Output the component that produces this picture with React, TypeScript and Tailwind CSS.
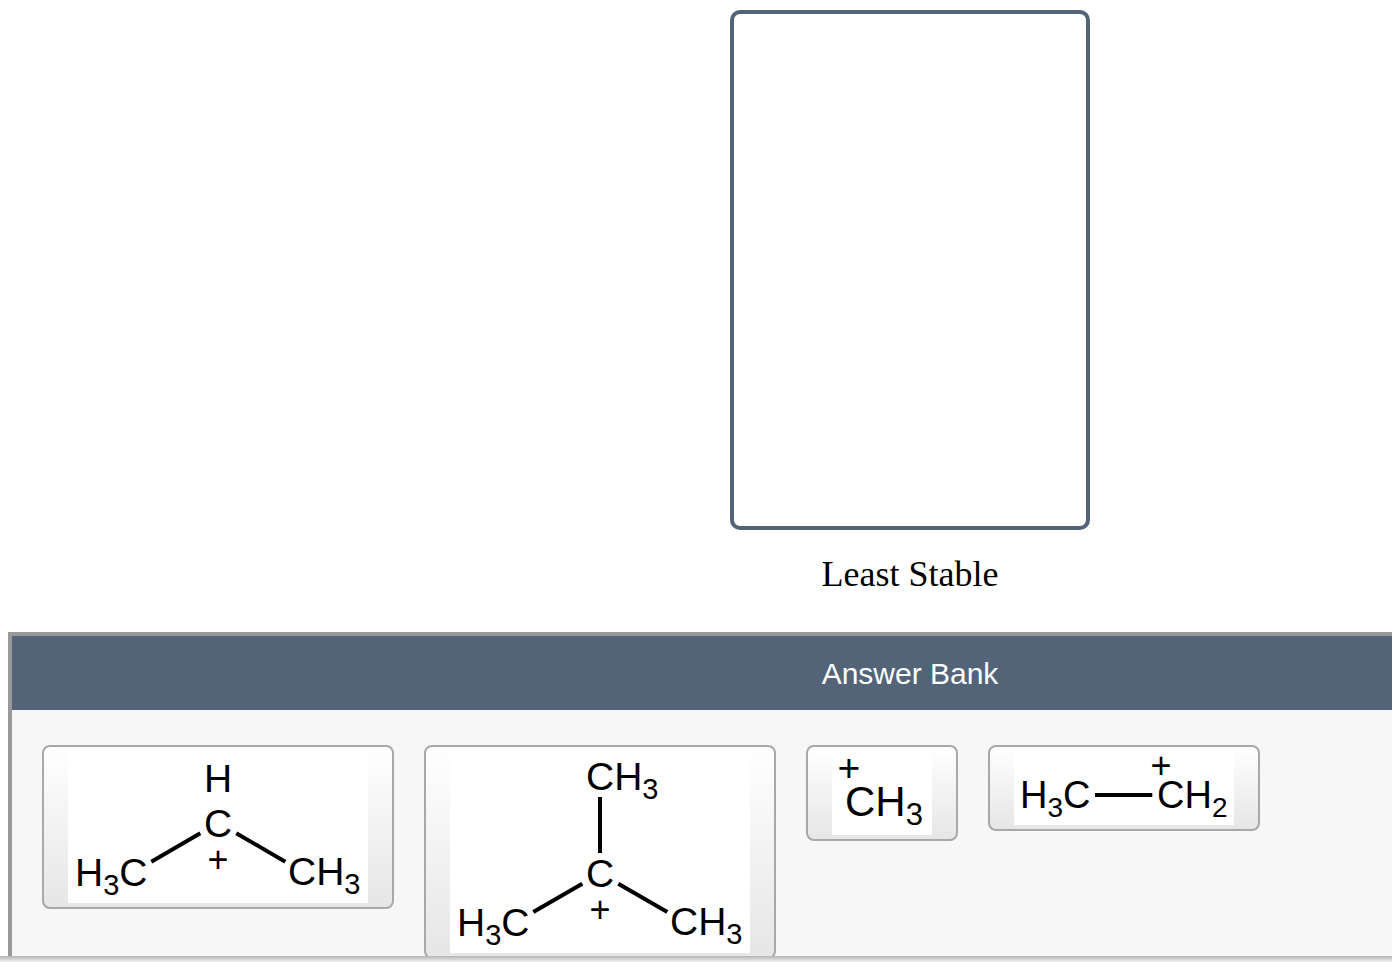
import type { ReactNode } from "react";

type LabelProps = { x: number; y: number; size?: number; sub?: number };

/** Methyl-style group written carbon first: C H n */
function CarbonFirst({ x, y, count, size = 39, sub = 29 }: LabelProps & { count: number }) {
  return (
    <text x={x} y={y} fontSize={size}>
      CH
      <tspan dy={9} fontSize={sub}>
        {count}
      </tspan>
    </text>
  );
}

/** Methyl group written hydrogen first: H 3 C */
function HydrogenFirst({ x, y, size = 39, sub = 29 }: LabelProps) {
  return (
    <text x={x} y={y} fontSize={size}>
      H
      <tspan dy={9} fontSize={sub}>
        3
      </tspan>
      <tspan dy={-9}>C</tspan>
    </text>
  );
}

function Atom({ x, y, size = 39, children }: LabelProps & { children: ReactNode }) {
  return (
    <text x={x} y={y} fontSize={size} textAnchor="middle">
      {children}
    </text>
  );
}

function Structure({ width, height, label, children }: { width: number; height: number; label: string; children: ReactNode }) {
  return (
    <svg
      width={width}
      height={height}
      viewBox={`0 0 ${width} ${height}`}
      role="img"
      aria-label={label}
      className="block overflow-visible bg-white fill-black font-['Liberation_Sans',Arial,sans-serif]"
    >
      {children}
    </svg>
  );
}

function AnswerCard({ children }: { children: ReactNode }) {
  return (
    <button
      type="button"
      draggable
      className="shrink-0 cursor-grab rounded-lg border-2 border-[#a8a8a8] bg-linear-to-b from-white to-[#e6e6e6] px-6 pt-1.5 pb-1"
    >
      {children}
    </button>
  );
}

export default function App() {
  return (
    <div className="flex h-screen flex-col overflow-hidden bg-white">
      <main className="min-h-0 flex-1 overflow-hidden pl-2">
        <div className="flex w-[calc(100%+420px)] flex-col">
          <section className="flex flex-col items-center pt-2.5" aria-labelledby="least-stable">
            <div className="h-[520px] w-[360px] rounded-[10px] border-4 border-[#536479]" />
            <p
              id="least-stable"
              className="mt-6 font-['Liberation_Serif','Times_New_Roman',serif] text-[36px] leading-10 text-black"
            >
              Least Stable
            </p>
          </section>

          <section className="mt-[38px] border-4 border-[#999] bg-[#f7f7f7]">
            <h2 className="bg-[#536479] pt-5 pb-[18px] text-center font-['Liberation_Sans',Arial,sans-serif] text-[30px] leading-9 text-white">
              Answer Bank
            </h2>
            <div className="flex items-start gap-[30px] px-[30px] py-[35px]">
              <AnswerCard>
                <Structure width={300} height={150} label="Isopropyl cation">
                  <Atom x={150} y={39}>H</Atom>
                  <Atom x={150} y={84}>C</Atom>
                  <Atom x={150} y={119} size={36}>+</Atom>
                  <HydrogenFirst x={7} y={133} />
                  <CarbonFirst x={220} y={132} count={3} />
                  <path d="M83.3 108.7 132.3 80.3M168.3 80.3 217.3 108.7" stroke="black" strokeWidth={4} />
                </Structure>
              </AnswerCard>
              <AnswerCard>
                <Structure width={300} height={200} label="tert-Butyl cation">
                  <CarbonFirst x={136} y={37} count={3} />
                  <Atom x={150} y={134}>C</Atom>
                  <Atom x={150} y={169} size={36}>+</Atom>
                  <HydrogenFirst x={7} y={183} />
                  <CarbonFirst x={220} y={182} count={3} />
                  <path d="M150 44V100M83.3 159 132.3 130.7M168.3 130.7 217.3 159" stroke="black" strokeWidth={4} />
                </Structure>
              </AnswerCard>
              <AnswerCard>
                <Structure width={100} height={82} label="Methyl cation">
                  <Atom x={17} y={28} size={39}>+</Atom>
                  <CarbonFirst x={13} y={63} size={42} sub={31} count={3} />
                </Structure>
              </AnswerCard>
              <AnswerCard>
                <Structure width={220} height={72} label="Ethyl cation">
                  <HydrogenFirst x={6} y={55} size={38} sub={28} />
                  <CarbonFirst x={143} y={55} size={38} sub={28} count={2} />
                  <Atom x={147} y={25} size={36}>+</Atom>
                  <path d="M81 42H138.3" stroke="black" strokeWidth={4} />
                </Structure>
              </AnswerCard>
            </div>
          </section>
        </div>
      </main>
      <div className="h-1.5 shrink-0 bg-linear-to-b from-[#b4b4b4] to-[#f2f2f2]" />
    </div>
  );
}
